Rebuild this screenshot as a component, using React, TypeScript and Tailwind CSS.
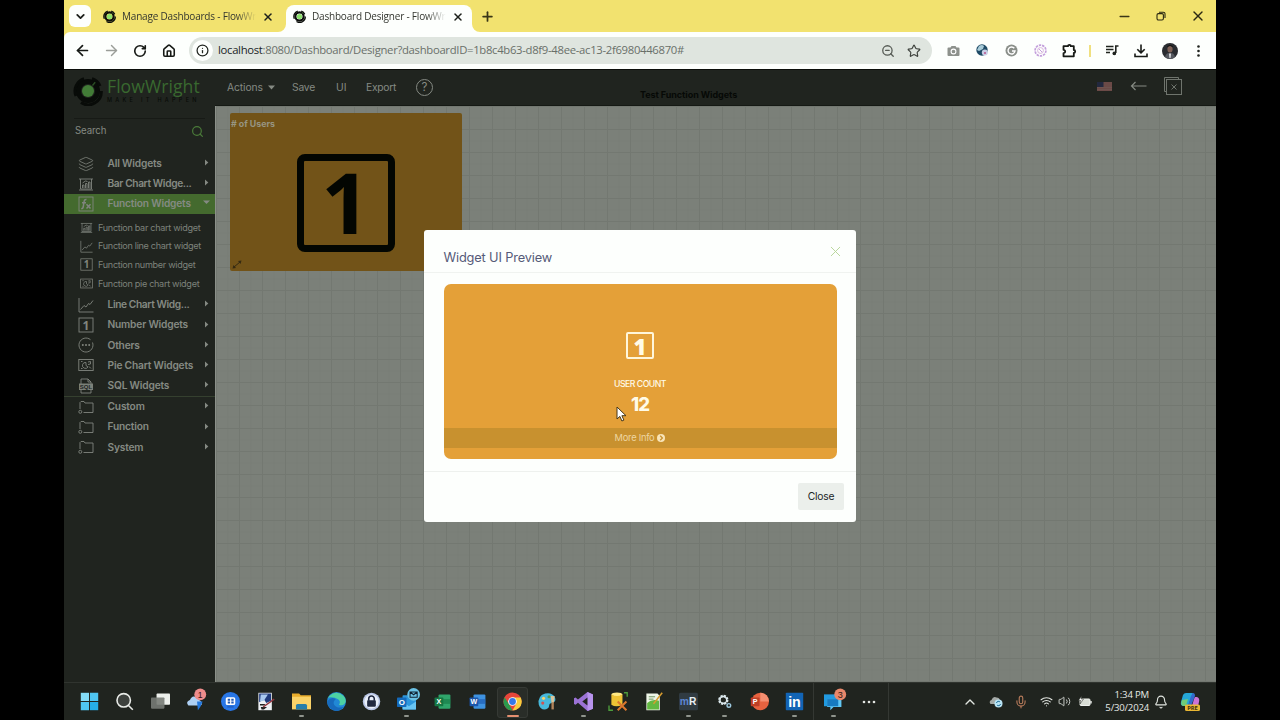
import type { ReactNode } from "react";
import {
  ArrowLeft, ArrowRight, RotateCw, House, Info, ZoomOut, Star, 
  X, Plus, Minus, ChevronDown, ChevronUp, Search, Layers, Bell, Mic, Wifi, Volume2,
} from "lucide-react";

const ui = "font-['Inter','Liberation_Sans',sans-serif]";
const win = "font-['Open_Sans','Noto_Sans',sans-serif]";

function Swirl({ size, disc = "#8be36a", ring = "#0c0f0b" }: { size: number; disc?: string; ring?: string }) {
  return (
    <svg width={size} height={size} viewBox="0 0 30 30" fill="none">
      <circle cx="15" cy="15" r="9.500" stroke={ring} strokeWidth="5" />
      <path d="M3 20A13 13 0 0 1 11 2.6M19 2.6A13 13 0 0 1 27 10M28.3 15A13 13 0 0 1 8 26.5" stroke={ring} strokeWidth="3" />
      <path d="M19.500 9.500l2.700-3.200" stroke={disc} strokeOpacity=".6" strokeWidth="1.400" />
      <circle cx="15" cy="15" r="6" fill={disc} />
    </svg>
  );
}

function Tab({ title, active }: { title: string; active?: boolean }) {
  return (
    <div className={`relative flex h-[27px] items-center pb-[4px] pl-[7px] ${active ? "w-[186px] rounded-t-lg bg-[#fdfffd]" : "w-[190px]"}`}>
      {active && (
        <>
          <svg className="absolute bottom-0 -left-2" width="8" height="8"><path d="M8 0V8H0A8 8 0 0 0 8 0Z" fill="#fdfffd" /></svg>
          <svg className="absolute -right-2 bottom-0" width="8" height="8"><path d="M0 0V8H8A8 8 0 0 1 0 0Z" fill="#fdfffd" /></svg>
        </>
      )}
      <Swirl size={13} />
      <div className="ml-[6px] w-[134px] overflow-hidden text-[10px] tracking-[-0.200px] whitespace-nowrap text-[#33362f] [mask-image:linear-gradient(90deg,#000_85%,transparent)]">{title}</div>
      <X className="ml-[6px] shrink-0" size={12} strokeWidth={3} color="#1d201b" />
    </div>
  );
}

function BrowserBar() {
  return (
    <>
      <div className={`flex h-8 shrink-0 items-end bg-[#f2e26f] ${win}`}>
        <div className="mb-[5px] ml-[5px] flex h-[22px] w-[22px] items-center justify-center rounded-md bg-[#fdfffd]">
          <ChevronDown size={13} strokeWidth={3.400} color="#1d201b" />
        </div>
        <div className="ml-[5px]"><Tab title="Manage Dashboards - FlowWright" /></div>
        <Tab title="Dashboard Designer - FlowWright" active />
        <div className="ml-[8px] flex h-8 items-center"><Plus size={15} strokeWidth={2.800} color="#3a3617" /></div>
        <div className="ml-auto flex h-8 items-center pr-[10px]">
          <Minus size={15} strokeWidth={2.200} color="#3a3617" />
          <svg className="mr-[24px] ml-[24px]" width="10" height="10" viewBox="0 0 10 10" fill="none" stroke="#2a2812" strokeWidth="1.100"><rect x="1" y="2.600" width="6.400" height="6.400" rx="1.400" /><path d="M3 1.200h4.300a1.700 1.700 0 0 1 1.700 1.700V7" /></svg>
          <X size={16} strokeWidth={2} color="#2a2812" />
        </div>
      </div>
      <div className={`flex h-[37px] shrink-0 items-center rounded-tl-md bg-[#fdfffd] ${win}`}>
        <div className="flex w-[125px] shrink-0">
          <div className="ml-[3.500px] grid w-[116px] grid-cols-4 place-items-center">
            <ArrowLeft size={17} strokeWidth={2.400} color="#171a16" />
            <ArrowRight size={17} strokeWidth={2} color="#9a9d98" />
            <RotateCw size={14} strokeWidth={2.800} color="#171a16" />
            <House size={14} strokeWidth={2.700} color="#171a16" />
          </div>
        </div>
        <div className="flex h-[27px] w-[743px] shrink-0 items-center rounded-full bg-[#dfe5df]">
          <div className="ml-[3px] flex h-[21px] w-[21px] items-center justify-center rounded-full bg-[#fdfffd]">
            <Info size={13} strokeWidth={2.300} color="#20241f" />
          </div>
          <div className="ml-[5px] w-[470px] text-[11.300px] tracking-[-0.305px] whitespace-nowrap text-[#6a706a]">
            <span className="text-[#20241f]">localhost</span>:8080/Dashboard/Designer?dashboardID=1b8c4b63-d8f9-48ee-ac13-2f6980446870#
          </div>
          <ZoomOut className="ml-auto" size={14} strokeWidth={2.200} color="#565b55" />
          <Star className="mr-[11px] ml-[12px]" size={14} strokeWidth={2} color="#3f433e" />
        </div>
        <div className="flex flex-1 items-center">
          <svg className="ml-[15px]" width="13" height="12" viewBox="0 0 13 12"><path d="M1.500 2.500h2L4.500 1h4l1 1.500h2a1 1 0 0 1 1 1V10a1 1 0 0 1-1 1h-10a1 1 0 0 1-1-1V3.500a1 1 0 0 1 1-1Z" fill="#8d918c" /><circle cx="6.500" cy="6.500" r="2.400" fill="none" stroke="#fff" strokeWidth="1.100" /></svg>
          <svg className="ml-[16px]" width="13" height="13" viewBox="0 0 13 13"><circle cx="6" cy="6" r="5.700" fill="#1f4b66" /><path d="M3 2q3-2 5 0l-1 3-4 2-2-1Z" fill="#a9cbd8" /><circle cx="8.800" cy="8.600" r="3" fill="#c9cfe6" /><circle cx="9" cy="9" r="1" fill="#b7538c" /></svg>
          <svg className="ml-[16px]" width="13" height="13" viewBox="0 0 13 13"><circle cx="6.500" cy="6.500" r="6" fill="#8a8f89" /><path d="M9.300 4.300A3.500 3.500 0 1 0 10 7H7" fill="none" stroke="#fff" strokeWidth="1.400" /></svg>
          <svg className="ml-[16px]" width="13" height="13" viewBox="0 0 13 13" fill="none" stroke="#c4a0dc"><circle cx="6.500" cy="6.500" r="5.400" strokeWidth="1.700" strokeDasharray="2.400 .9" /><circle cx="6.500" cy="6.500" r="2.900" stroke="#d9b6de" /><path d="M5 5l3 3" /></svg>
          <svg className="ml-[15px]" width="15" height="15" viewBox="0 0 15 15" fill="none" stroke="#171a16" strokeWidth="1.800"><path d="M1.500 3.200H6a1.400 1.400 0 0 1 2.800 0h3V7a1.400 1.400 0 0 1 0 2.800V13.300H1.500V10.200a1.700 1.700 0 0 0 0-3.400Z" strokeLinejoin="round" /></svg>
          <div className="ml-[12px] h-3 w-[1.500px] bg-[#f0e080]" />
          <svg className="ml-[14px]" width="14" height="13" viewBox="0 0 14 13" fill="none" stroke="#20241f" strokeWidth="1.600"><path d="M1 2.500h7.500M1 5.500h7.500M1 8.500h4M13.500 2h-2.700v7" /><circle cx="9.300" cy="9.400" r="1.500" fill="#20241f" stroke="none" /><circle cx="9.300" cy="9.400" r="1" /></svg>
          <svg className="ml-[15px]" width="14" height="14" viewBox="0 0 14 14" fill="none" stroke="#171a16" strokeWidth="1.600"><path d="M7 0.500v8M3.300 5.200L7 8.900l3.700-3.700M1 9.500v3h12v-3" /></svg>
          <svg className="ml-[14px]" width="16" height="16" viewBox="0 0 16 16"><circle cx="8" cy="8" r="8" fill="#2a2c30" /><ellipse cx="8" cy="6" rx="2.600" ry="3.500" fill="#806257" /><path d="M5.300 4.500q2.700-3 5.400 0V3Q8 1 5.300 3Z" fill="#111" /><path d="M3 14q1-4 4-4l1 1 1-1q3 0 4 4-5 4-10 0Z" fill="#55585f" /><path d="M7 10.500h2L8.500 15h-1Z" fill="#e4e4e8" /></svg>
          <svg className="ml-[18px]" width="5" height="14" viewBox="0 0 5 14" fill="#20241f"><circle cx="2.500" cy="2.500" r="1.300" /><circle cx="2.500" cy="7" r="1.300" /><circle cx="2.500" cy="11.500" r="1.300" /></svg>
        </div>
      </div>
    </>
  );
}

const barIcon = <><path d="M1 3h14M2.500 3v10h11V3M1 14h14" /><path d="M4.500 12V9h1.500v3M7.500 12V7.500h1.500v4.500M10.500 12V6H12v6M4.500 7l3-2 2 .5" /></>;
const lineIcon = <><path d="M1 1v14h14.500" /><path d="M2.500 12.500L6 8.500l2 1.500 2.500-3.500 1.500 1 3-4" /></>;
const oneIcon = <><rect x="1" y="1" width="14" height="14" /><text x="8" y="12.500" textAnchor="middle" fontSize="12" fontWeight="700" fill="currentColor" stroke="none" className="font-['Open_Sans']">1</text></>;
const pieIcon = <><rect x=".8" y="2.500" width="14.400" height="11" /><path d="M8 5.500A3 3 0 1 0 10 10L8 8.500ZM10 5l2.500-.5V7L10 7.500M11 9.500l2 2M3 4.500h1.500M3 11.500h1.500" /></>;
const folderIcon = <><path d="M2 10V3.500L3 2.500h3l1 1.500h8v9.500H5.500" /><circle cx="2.300" cy="12.800" r="1.500" /></>;
const fxIcon = <><rect x="1" y="1" width="14" height="14" /><path d="M8.500 3.500Q6.500 3 6 6L5.200 11q-.4 2-2 1.500M4 6.800h4" strokeWidth="1.500" /><path d="M8.500 8.200l4 4.300M12.500 8.200l-4 4.300" strokeWidth="1.500" /></>;
const otherIcon = <><path d="M12.500 2.700A7 7 0 1 0 14.500 5.500" /><g fill="currentColor" stroke="none"><circle cx="4.800" cy="8" r="1" /><circle cx="8" cy="8" r="1" /><circle cx="11.200" cy="8" r="1" /></g></>;
const sqlIcon = <><path d="M3 6V1h7l3 3v2M3 12v3h10v-3M10 1v3h3" /><rect x="1" y="5.500" width="14" height="6.500" fill="#7b8079" stroke="none" /><text x="8" y="11" textAnchor="middle" fontSize="6" fontWeight="700" fill="#20241f" stroke="none" className="font-['Liberation_Sans']">SQL</text></>;

function Glyph({ children, size = 16 }: { children: ReactNode; size?: number }) {
  return <svg width={size} height={size} viewBox="0 0 16 16" fill="none" stroke="currentColor" strokeWidth=".9" className="shrink-0 text-[#80857e]">{children}</svg>;
}

function Row({ icon, label, open }: { icon: ReactNode; label: string; open?: boolean }) {
  return (
    <div className={`flex h-[20.200px] items-center pl-[14px] text-[#858a83] ${open ? "bg-[#446a2e]" : ""}`}>
      {icon}
      <span className={`ml-[13.500px] text-[10.200px] font-semibold whitespace-nowrap ${label.endsWith("...") ? "tracking-[-0.380px]" : "tracking-[-0.180px]"}`}>{label}</span>
      <svg className="mr-[5px] mb-[2px] ml-auto" width="7" height="7" viewBox="0 0 7 7" fill="#858a83">{open ? <path d="M0 1.500h7L3.500 5Z" /> : <path d="M2 0.500L5.300 3.500 2 6.500Z" />}</svg>
    </div>
  );
}

function SubRow({ icon, label }: { icon: ReactNode; label: string }) {
  return (
    <div className="flex h-[18.700px] items-center pl-[16px] text-[#7d827b]">
      <Glyph size={13}>{icon}</Glyph>
      <span className="ml-[5px] text-[9.100px] tracking-[-0.310px] whitespace-nowrap">{label}</span>
    </div>
  );
}

function Sidebar() {
  return (
    <div className="flex w-[151px] shrink-0 flex-col bg-[#20241f]">
      <div className="flex h-[48px] items-start pt-[6px] pl-[9px]">
        <Swirl size={30} disc="#427c37" ring="#080b08" />
        <div className="ml-[4px]">
          <div className="font-['Open_Sans'] text-[17.600px] leading-[21px] tracking-[0.050px] text-[#39692f]">FlowWright</div>
          <div className="text-[5.500px] leading-[6px] font-medium tracking-[3.300px] whitespace-nowrap text-[#090c08]">MAKE IT HAPPEN</div>
        </div>
      </div>
      <div className="mx-[10px] h-px bg-[#171a16]" />
      <div className="flex h-[24px] items-center justify-between pr-[11px] pl-[11px]">
        <span className="text-[9.700px] tracking-[-0.150px] text-[#858a83]">Search</span>
        <Search size={13} strokeWidth={2.200} color="#4a7b39" />
      </div>
      <div className="mt-[10.500px]">
        <Row icon={<Layers size={16} strokeWidth={1.200} color="#80857e" />} label="All Widgets" />
        <Row icon={<Glyph>{barIcon}</Glyph>} label="Bar Chart Widge..." />
        <Row icon={<Glyph>{fxIcon}</Glyph>} label="Function Widgets" open />
      </div>
      <div className="pt-[4px] pb-[2px]">
        <SubRow icon={barIcon} label="Function bar chart widget" />
        <SubRow icon={lineIcon} label="Function line chart widget" />
        <SubRow icon={oneIcon} label="Function number widget" />
        <SubRow icon={pieIcon} label="Function pie chart widget" />
      </div>
      <Row icon={<Glyph>{lineIcon}</Glyph>} label="Line Chart Widg..." />
      <Row icon={<Glyph>{oneIcon}</Glyph>} label="Number Widgets" />
      <Row icon={<Glyph>{otherIcon}</Glyph>} label="Others" />
      <Row icon={<Glyph>{pieIcon}</Glyph>} label="Pie Chart Widgets" />
      <Row icon={<Glyph>{sqlIcon}</Glyph>} label="SQL Widgets" />
      <div className="h-px bg-[#35402f]" />
      <Row icon={<Glyph>{folderIcon}</Glyph>} label="Custom" />
      <Row icon={<Glyph>{folderIcon}</Glyph>} label="Function" />
      <Row icon={<Glyph>{folderIcon}</Glyph>} label="System" />
    </div>
  );
}

function Header() {
  return (
    <div className="flex h-[36px] shrink-0 items-center border-b border-[#151914] bg-[#20241f] text-[10.300px] text-[#858a83]">
      <span className="ml-[12px] w-[36px] tracking-[-0.100px]">Actions</span>
      <svg className="ml-[5px]" width="7" height="5" viewBox="0 0 7 5" fill="#858a83"><path d="M0 .5h7L3.500 4.500Z" /></svg>
      <span className="ml-[17px] w-[24px] tracking-[-0.200px]">Save</span>
      <span className="ml-[20px] w-[10px]">UI</span>
      <span className="ml-[20px] w-[30px] tracking-[-0.250px]">Export</span>
      <span className="ml-[20px] flex h-[17px] w-[17px] items-center justify-center rounded-full border border-[#858a83] text-[11.500px]">?</span>
      <span className="mt-[14px] ml-[207px] text-[9px] font-bold tracking-[-0.060px] whitespace-nowrap text-[#060906]">Test Function Widgets</span>
      <svg className="mb-[3px] ml-auto" width="15" height="9"><rect width="15" height="9" fill="#6b4a47" /><path d="M0 5.500h15M0 7.500h15" stroke="#73635e" strokeWidth=".4" /><rect width="6.500" height="5" fill="#22283f" /></svg>
      <svg className="mb-[4px] ml-[18px]" width="17" height="10" viewBox="0 0 17 10" fill="none" stroke="#858a83" strokeWidth="1.200"><path d="M16.500 5H1.500M5.500 1L1.500 5l4 4" /></svg>
      <svg className="mr-[34px] mb-[3px] ml-[17px]" width="18" height="18" viewBox="0 0 18 18" fill="none" stroke="#6f746d"><path d="M2.500 14.500h-2V.5h14v2" /><rect x="2.500" y="2.500" width="15" height="15" /><path d="M7.500 7.500l5 5M12.500 7.500l-5 5" /></svg>
    </div>
  );
}

function Canvas() {
  return (
    <div className="flex-1 border-l border-[#8b9089] bg-[#7b8079] bg-[linear-gradient(#737871_1px,transparent_1px),linear-gradient(90deg,#737871_1px,transparent_1px),linear-gradient(#787d76_1px,transparent_1px),linear-gradient(90deg,#787d76_1px,transparent_1px)] bg-[length:23px_23px,23px_23px,11.500px_11.500px,11.500px_11.500px] bg-[position:0_23px,0_0,0_23px,0_0] pt-[6.500px] pl-[13.500px]">
      <div className="flex h-[158px] w-[232px] flex-col rounded-[2px] bg-[#725318]">
        <div className="flex h-[41px] pt-[4px] pl-[1.500px] text-[8.800px] leading-[13px] font-bold text-[#979582]">#&nbsp;of Users</div>
        <div className="mx-auto flex h-[98px] w-[98px] items-center justify-center rounded-[8px] border-[7.500px] border-[#030602] font-['Open_Sans'] text-[85px] leading-none font-bold text-[#030602]">
          <span className="pb-[2px]">1</span>
        </div>
        <svg className="mt-[8px] ml-[2px]" width="10" height="9" viewBox="0 0 10 9" stroke="#352a12" fill="#352a12"><path d="M2 7L8 2" /><path d="M9.500.5L6 1l2.500 3ZM.5 8.500L4 8 1.500 5Z" stroke="none" /></svg>
      </div>
    </div>
  );
}

function Preview() {
  return (
    <div className={`absolute top-[229.500px] left-[360px] flex h-[292px] w-[432px] flex-col rounded-[3px] bg-[#fdfffd] ${ui}`}>
      <div className="flex h-[43px] shrink-0 items-start justify-between border-b border-[#f0f3f0] pt-[13.500px] pr-[12px] pl-[19.500px]">
        <span className="mt-[4.500px] text-[12.800px] leading-[20px] tracking-[-0.150px] text-[#555a78]">Widget UI Preview</span>
        <X size={17} strokeWidth={1.300} color="#b5d595" />
      </div>
      <div className="flex flex-1 justify-center pt-[11.500px]">
        <div className="flex h-[175px] w-[393px] flex-col items-center overflow-hidden rounded-[7px] bg-[#e4a038] text-[#fffbe8]">
          <div className="mt-[48px] flex h-[27px] w-[28px] items-center justify-center rounded-[2px] border-2 border-[#fff6da] font-['Open_Sans'] text-[22px] leading-none font-extrabold">1</div>
          <div className="mt-[18px] text-[8.700px] leading-[14px] font-medium tracking-[-0.500px]">USER COUNT</div>
          <div className="mt-[2px] text-[18.500px] leading-[22px] font-extrabold tracking-[-1px]">12</div>
          <div className="mt-[13px] flex h-[20px] w-full shrink-0 items-center justify-center gap-[3px] bg-[#c8912f] text-[9.300px] tracking-[-0.250px] text-[#eed6a0]">
            More Info
            <svg width="8" height="8" viewBox="0 0 8 8"><circle cx="4" cy="4" r="4" fill="#f8e4b8" /><path d="M3.200 1.800L5.400 4 3.200 6.200" fill="none" stroke="#c8912f" strokeWidth="1.300" /></svg>
          </div>
        </div>
      </div>
      <div className="flex h-[51px] shrink-0 items-start justify-end border-t border-[#eef1ee] pt-[11.500px] pr-[12px]">
        <div className="flex h-[27px] w-[46px] items-center justify-center rounded-[2px] bg-[#ebefeb] text-[10.300px] tracking-[-0.250px] text-[#20241f]">Close</div>
      </div>
    </div>
  );
}

function Doc({ letter, a, b }: { letter: string; a: string; b: string }) {
  return <><rect x="7" y="3" width="15" height="18" rx="1.500" fill={a} /><path d="M7 9h15v6H7Z" fill={b} opacity=".6" /><rect x="2" y="7" width="11" height="11" rx="1" fill={b} /><text x="7.500" y="15.500" textAnchor="middle" fontSize="9" fontWeight="700" fill="#fff">{letter}</text></>;
}

type Task = { art: ReactNode; run?: boolean; active?: boolean };
const tasks: Task[] = [
  { art: <g fill="#4fc6f2"><path d="M1 1h10.400v10.400H1Z" fill="#83dcf8" /><path d="M12.600 1H23v10.400h-10.400ZM1 12.600h10.400V23H1Z" /><path d="M12.600 12.600H23V23h-10.400Z" fill="#26aee8" /></g> },
  { art: <g fill="none" stroke="#e8ebe7" strokeWidth="2"><circle cx="11" cy="10.500" r="8.500" fill="#3d413d" /><path d="M17 17l5.500 5.500" /></g> },
  { art: <><rect x="7" y="2" width="17" height="14" rx="1" fill="#edf0ec" /><rect x="0" y="7" width="17" height="14" rx="1" fill="#777b76" opacity=".9" /></> },
  { art: <><path d="M3 17q-4-5 2-7 3-7 8-3l6 5q3 5-2 5Z" fill="#aed0f4" /><path d="M14 12h7l-3 7-3 4Z" fill="#2377dc" /><circle cx="18" cy="3" r="7.500" fill="#ef8c8c" /><text x="18" y="7" fontSize="11" textAnchor="middle" fill="#351717">1</text></> },
  { art: <><circle cx="12" cy="12" r="12" fill="#2876e6" /><rect x="6" y="6.500" width="12" height="10" rx="2" fill="#fff" /><path d="M8.500 8.500h3v2.500h-3Zm4.500 0h3v2.500h-3Zm-4.500 3.500h3v2.500h-3Zm4.500 0h3v2.500h-3ZM8 18h8v1.500H8Z" fill="#2159b4" /></> },
  { art: <><rect x="3" y="1" width="17" height="22" fill="#eef1f5" /><path d="M4 2h15v9l-6 3-3-5-6 4Z" fill="#203a7c" /><path d="M6 3h9l-5 8-5 1Z" fill="#a8c8ef" /><path d="M5 15h7l-2 2H5ZM6 19h8l-4 3H7Z" fill="#222" /><path d="M9 19L23 9" stroke="#93363e" strokeWidth="1.800" /></> },
  { art: <><path d="M0 2h9l2 2h13v16H0Z" fill="#e9ad2c" /><path d="M0 6h24v16H0Z" fill="#f9d268" /><path d="M5 22v-5q0-2 2-2h10q2 0 2 2v5Z" fill="#267eaa" /></>, run: true },
  { art: <><circle cx="12" cy="12" r="12" fill="#2188d5" /><path d="M1 7Q11-4 21 5q5 6 1 10-3 3-7 1 3-4-1-7-5-3-13-2Z" fill="#4dd1a2" /><path d="M0 12q5-7 11-3-4 3-2 7 3 5 12 3-6 7-13 4-7-3-8-11Z" fill="#176abc" /></> },
  { art: <><circle cx="12" cy="12" r="11" fill="#b9c6e6" /><circle cx="12" cy="12" r="9" fill="#e9effa" /><path d="M8.500 11V8.500a3.500 3.500 0 0 1 7 0V11" fill="none" stroke="#202840" strokeWidth="2" /><rect x="6.500" y="10.500" width="11" height="8" rx="1" fill="#202840" /></> },
  { art: <><rect x="7" y="4" width="17" height="18" rx="1" fill="#2d96dc" /><path d="M7 12l8 6 9-6v10H7Z" fill="#68c5f4" /><rect x="0" y="7" width="12" height="12" rx="1" fill="#146abb" /><text x="6" y="16.500" textAnchor="middle" fontSize="10" fontWeight="700" fill="#fff">O</text><circle cx="21" cy="3" r="8" fill="#6bc2e5" /><path d="M16.500 0h9v6.500h-9Zm0 0l4.500 3.500L25.500 0" fill="none" stroke="#123" strokeWidth="1.300" /></>, run: true },
  { art: <Doc letter="X" a="#2fa56a" b="#167743" /> },
  { art: <Doc letter="W" a="#3e92e0" b="#1b55ab" /> },
  { art: <><circle cx="12" cy="12" r="11.500" fill="#e6453a" /><path d="M2 6.500L8 16l4 7.500Q4 23 1 15 0 10 2 6.500Z" fill="#2a9b4d" /><path d="M12 7h10.500q3 8-2 13-4 3.500-8.500 3.500l5-9Z" fill="#f8cd3d" /><circle cx="12" cy="12" r="5.500" fill="#fff" /><circle cx="12" cy="12" r="4.300" fill="#3577e8" /></>, run: true, active: true },
  { art: <><path d="M1 16Q-1 5 9 2q8-2 12 4 3 6-3 8-4 0-4 4-1 4-6 4-5 0-7-6Z" fill="#47b9dc" /><circle cx="7" cy="8" r="2" fill="#f8d36c" /><circle cx="14" cy="6" r="2" fill="#53994c" /><circle cx="6" cy="14" r="2" fill="#cf5353" /><path d="M17 11h3v11h-3Z" fill="#b1845b" /><path d="M16 5h5l-1 8h-3Z" fill="#d8c49d" /></> },
  { art: <><path d="M17 0l7 3v18l-7 3L5 13.500 2 16l-2-1V8l2-1 3 2.500Z" fill="#9b72d5" /><path d="M17 0l7 3v18l-7 3Z" fill="#b894ed" /><path d="M17 7v10l-6.500-5Z" fill="#20241f" /></>, run: true },
  { art: <><ellipse cx="10" cy="3" rx="7" ry="2.500" fill="#ffe983" /><path d="M3 3v13q6 4 14 0V3q-7 4-14 0Z" fill="#efc334" /><path d="M11 12l11 11M22 12L11 23" stroke="#dc782e" strokeWidth="2.600" /><path d="M0 17v6h5M19 1h4v5" fill="none" stroke="#4d9d3c" strokeWidth="1.700" /></> },
  { art: <><path d="M3 2h14l3 3v18H3Z" fill="#eef5e7" /><path d="M4 14q6-6 15-3v11H4Z" fill="#63b842" /><path d="M6 6h8M6 9h6" stroke="#4c7a40" /><path d="M12 15L23 1" stroke="#d79c2f" strokeWidth="2" /></> },
  { art: <><rect x="0" y="1" width="24" height="22" rx="2" fill="#303b42" /><text x="1" y="17" fontSize="13" fontWeight="600" fill="#5d86d3">m<tspan fill="#e8eff5">R</tspan></text></>, run: true },
  { art: <><circle cx="10.500" cy="10" r="5" fill="none" stroke="#dce9ed" strokeWidth="3" strokeDasharray="2.700 1.200" /><circle cx="10.500" cy="10" r="4.300" fill="none" stroke="#dce9ed" strokeWidth="1.800" /><circle cx="17.500" cy="17" r="2.300" fill="none" stroke="#9cc8dd" strokeWidth="1.800" /></>, run: true },
  { art: <><circle cx="13" cy="12" r="11" fill="#e7623f" /><path d="M13 1a11 11 0 0 1 11 11H13Z" fill="#f58e70" /><rect x="1" y="7" width="11" height="11" rx="1" fill="#bf3f26" /><text x="6.500" y="15.500" textAnchor="middle" fontSize="9" fontWeight="700" fill="#fff">P</text></> },
  { art: <><rect x="1" y="1" width="22" height="22" rx="1" fill="#1264b5" /><text x="12" y="19" textAnchor="middle" fontSize="18" fontWeight="700" fill="#fff">in</text></>, run: true },
];

function TaskIcon({ art, run, active }: Task) {
  return (
    <div className="relative flex h-[38px] w-[35.250px] shrink-0 items-center justify-center pb-px">
      {active && <div className="absolute inset-x-[2px] top-[4px] bottom-[3px] rounded-[3px] border border-[#363a35] bg-[#292d28]" />}
      <svg className="relative overflow-visible font-['Liberation_Sans',sans-serif]" width="19" height="19" viewBox="0 0 24 24">{art}</svg>
      {run && <div className={`absolute bottom-[4px] h-[2px] rounded-full ${active ? "w-[12px] bg-[#e58f70]" : "w-[5px] bg-[#8f948d]"}`} />}
    </div>
  );
}

function Taskbar() {
  return (
    <div className={`flex h-[38px] shrink-0 items-center border-t border-[#30342f] bg-[#20241f] pl-[8px] ${win}`}>
      {tasks.map((t, i) => <TaskIcon key={i} {...t} />)}
      <div className="ml-[1px] h-full w-px shrink-0 bg-[#343833]" />
      <div className="flex w-[74px] shrink-0 items-center pl-[2px]">
        <TaskIcon run art={<><path d="M0 3h18v15H0Z" fill="#219ae0" /><path d="M4 9h18v10H12l-4 4v-4H4Z" fill="#62c8f5" /><path d="M4 9h14v9H4Z" fill="#177ac0" /><circle cx="20.500" cy="3" r="7.500" fill="#e8876b" /><text x="20.500" y="7" fontSize="11.500" textAnchor="middle" fill="#311b14">3</text></>} />
        <svg className="ml-[10px]" width="14" height="4" fill="#e2e6e1"><circle cx="2" cy="2" r="1.300" /><circle cx="7" cy="2" r="1.300" /><circle cx="12" cy="2" r="1.300" /></svg>
      </div>
      <div className="h-full w-px shrink-0 bg-[#343833]" />
      <div className="flex flex-1 items-center">
        <ChevronUp className="ml-[73px]" size={16} strokeWidth={2} color="#e2e6e1" />
        <svg className="ml-[11px]" width="14" height="13" viewBox="0 0 14 13"><path d="M1.500 9q-2-3 1-4Q4 1 7.500 2.500q3 0 3.500 3 2 2 0 3.500Z" fill="#a5aaa7" /><circle cx="9.500" cy="8.500" r="4" fill="#b9e4f4" /><path d="M7.500 8a2 2 0 0 1 3.500-1M11.500 9a2 2 0 0 1-3.500 1" fill="none" stroke="#24729b" /></svg>
        <Mic className="ml-[11px]" size={14} strokeWidth={1.900} color="#b77b5b" />
        <Wifi className="ml-[12px]" size={13} strokeWidth={2} color="#e2e6e1" />
        <Volume2 className="ml-[5px]" size={13} strokeWidth={1.600} color="#e2e6e1" />
        <svg className="ml-[7px]" width="14" height="11" viewBox="0 0 14 11"><rect x="2" y="3" width="10" height="6.500" rx="1" fill="#d8ddd5" stroke="#eef1ed" /><path d="M13 5v2.500" stroke="#eef1ed" strokeWidth="1.400" /><path d="M3.500 0L.5 4.500H3L2 8l3.500-5H3Z" fill="#fff" stroke="#20241f" strokeWidth=".5" /></svg>
        <div className="ml-auto text-right text-[9.600px] leading-[12.500px] tracking-[-0.200px] whitespace-nowrap text-[#e6e9e5]">1:34 PM<br />5/30/2024</div>
        <Bell className="ml-[5px]" size={14} strokeWidth={1.900} color="#e2e6e1" />
        <svg className="mr-[15px] ml-[12px]" width="21" height="20" viewBox="0 0 21 20"><path d="M6 1h7l-5 13H4Q0 14 1 10L3 3q1-2 3-2Z" fill="#25a6d7" /><path d="M2 8l6-1-2 7H3Q0 13 2 8Z" fill="#71cc78" /><path d="M13 1q2 0 2 3l-4 10H8l3-10Z" fill="#3269cc" /><path d="M15 5h2q3 1 2 5l-1 4h-6l2-7Z" fill="#cb73d6" /><rect x="5" y="12.500" width="15" height="6.500" rx="1.500" fill="#e9b733" /><text x="12.500" y="17.800" textAnchor="middle" fontSize="5.800" fontWeight="700" fill="#3b2e10">PRE</text></svg>
      </div>
    </div>
  );
}

export default function App() {
  return (
    <div className="flex h-[720px] w-[1280px] justify-center overflow-hidden bg-black">
      <div className="relative flex w-[1152px] flex-col bg-[#f2e26f]">
        <BrowserBar />
        <div className={`flex min-h-0 flex-1 border-t border-[#0b0e0a] ${ui}`}>
          <Sidebar />
          <div className="flex min-w-0 flex-1 flex-col">
            <Header />
            <Canvas />
          </div>
        </div>
        <Taskbar />
        <Preview />
        <svg className="absolute top-[406px] left-[552px]" width="11" height="16" viewBox="0 0 11 16"><path d="M1 1v12l2.900-2.600 2 4.600 2-.9-2-4.400H10Z" fill="#fff" stroke="#463719" /></svg>
      </div>
    </div>
  );
}
